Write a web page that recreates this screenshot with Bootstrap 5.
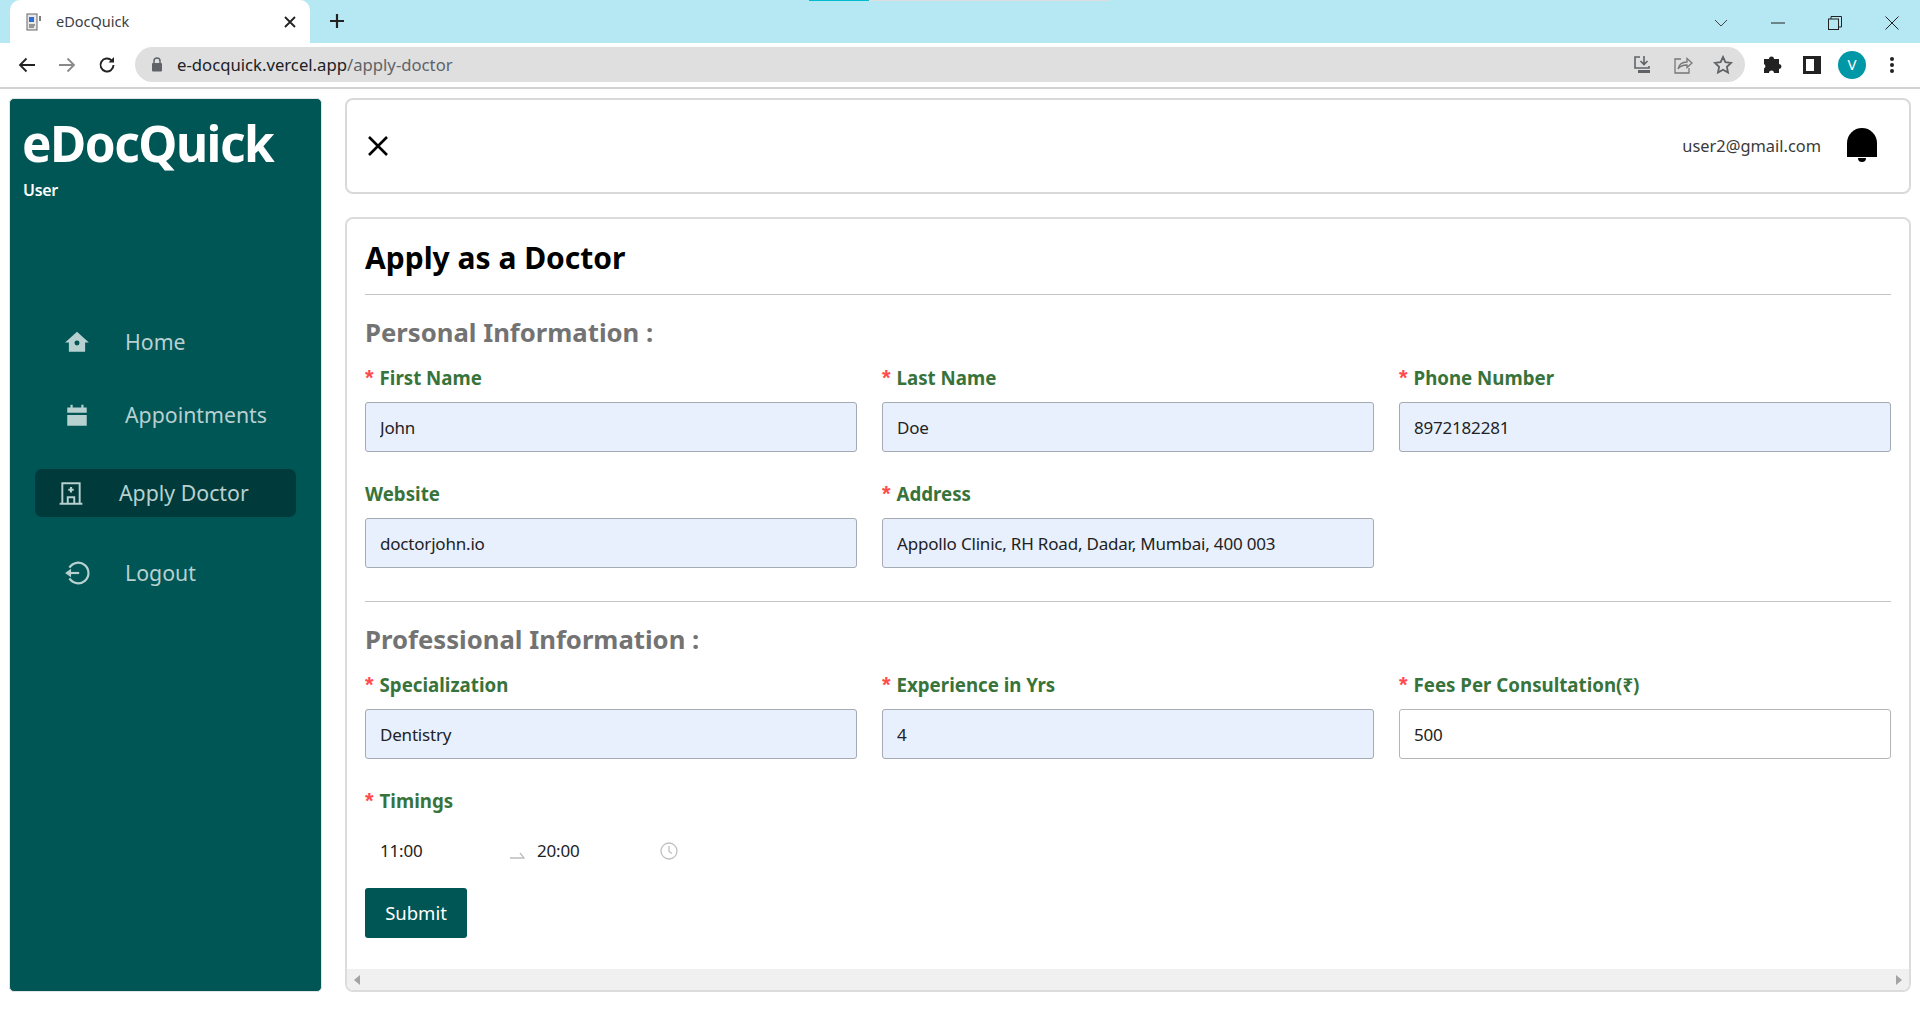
<!DOCTYPE html>
<html lang="en">
<head>
<meta charset="utf-8">
<title>eDocQuick</title>
<link rel="stylesheet" href="https://cdn.jsdelivr.net/npm/bootstrap@5.3.0/dist/css/bootstrap.min.css">
<style>
html,body{height:1017px;overflow:hidden;background:#fff;}
body{font-family:"Noto Sans","Open Sans",sans-serif;color:#212529;}
.tabstrip{height:43px;background:#b6e8f4;position:relative;}
.loadbar{position:absolute;top:0;left:809px;height:1px;width:300px;background:#ddd;}
.loadbar::before{content:"";position:absolute;left:0;top:0;height:1px;width:60px;background:#00bcd0;}
.browser-tab{width:300px;height:43px;margin-left:10px;background:#fff;border-radius:10px 10px 0 0;font-size:14.5px;padding:0 14px 0 15px;color:#3c4043;}
.tab-plus{margin:0 0 14px 19px;}
.win-ctl{width:57px;}
.toolbar{height:46px;border-bottom:2px solid #d2d2d2;padding:0 0 1px 7px;}
.tool-cell{width:40px;}
.omnibox{height:35px;width:1610px;margin:0 7px 0 8px;padding:0 0 0 16px;background:#dfdfdf;border-radius:18px;font-size:16.7px;color:#5f6368;}
.omnibox b{font-weight:400;color:#202124;}
.app-shell{height:928px;padding:9px 9px 25px 9px;gap:23px;}
.side-panel{width:313px;flex:none;background:#005555;border:1px solid #e4e4e4;border-radius:5px;color:#fff;}
.brand-name{font-size:49.500px;font-weight:700;line-height:64px;letter-spacing:-1.5px;margin:12px 0 0 12px;color:#fff;}
.brand-role{font-size:16px;font-weight:600;line-height:22px;margin:4px 0 0 13px;letter-spacing:-.3px;}
.side-menu{margin:117px 25px 0 25px;}
.side-item{height:48px;color:#b7d0d0;font-size:21.3px;border-radius:7px;padding-left:29px;text-decoration:none;}
.side-item svg{width:26px;height:26px;margin-right:35px;flex:none;}
.side-item.gap-a{margin-top:25px;}
.side-item.picked{margin-top:30px;background:#003a3a;padding-left:23px;}
.side-item.gap-c{margin-top:32px;}
.main-col{min-width:0;gap:23px;}
.top-panel{height:96px;background:#fff;border:2px solid #d9d9d9;border-radius:8px;padding:0 32px 0 20px;}
.user-mail{font-size:16.4px;margin-right:26px;color:#3a3a3a;}
.form-panel{background:#fff;border:2px solid #dcdcdc;border-radius:8px;overflow:hidden;}
.form-inner{padding:0 18px;}
.page-title{font-size:30px;font-weight:700;color:#000;line-height:42px;margin:18px 0 0 0;}
.rule-line{margin:15px 0 0 0;border-top:1px solid #a0a0a0;opacity:.6;}
.rule-line.tight{margin-top:4px;}
.sect-title{font-size:25.7px;font-weight:700;color:#737373;line-height:38px;margin:19px 0 0 0;}
.fields-row{--bs-gutter-x:25px;margin-top:13px;}
.fld-cell{margin-bottom:29px;}
.req-label{font-size:18.7px;font-weight:700;color:#37733a;line-height:26px;margin:0 0 11px 0;white-space:nowrap;}
.req-label i{color:#ff4d4f;font-family:"Liberation Sans",sans-serif;font-style:normal;font-weight:700;font-size:22px;line-height:20px;margin-right:6px;}
.form-control.fld{height:50px;border:1px solid #a5aab3;border-radius:3px;font-size:17px;letter-spacing:-.2px;padding:0 14px;color:#222;background:#e8f0fe;}
.form-control.fld.plain{background:#fff;border-color:#b5b5b5;}
.time-range{height:52px;font-size:17px;letter-spacing:-.2px;padding-left:15px;color:#222;}
.time-a{width:130px;}
.time-gap{margin-right:12px;margin-top:8px;}
.time-b{width:123px;}
.submit-btn{display:block;width:102px;height:50px;margin-top:11px;background:#005555;color:#fff;border:none;border-radius:3px;font-size:18.5px;padding:0;}
.submit-btn:hover{background:#005555;color:#fff;}
.hscroll{height:21px;background:#f0f0f0;padding:0 7px;}
</style>
</head>
<body>
<div class="tabstrip d-flex align-items-end">
  <div class="loadbar"></div>
  <div class="browser-tab d-flex align-items-center">
    <svg width="20" height="20" viewBox="0 0 20 20" class="me-2"><rect x="2" y="2" width="10" height="16" fill="#e8e8e8" stroke="#666"/><rect x="4" y="5" width="5" height="5" fill="#2b6fd6"/><path d="M4 13h6M4 15h5" stroke="#444"/><path d="M15 4v5" stroke="#555" stroke-width="1.5"/></svg>
    <span class="flex-grow-1" style="margin-left:3px">eDocQuick</span>
    <svg width="12" height="12" viewBox="0 0 12 12"><path d="M1 1l10 10M11 1L1 11" stroke="#222" stroke-width="1.8"/></svg>
  </div>
  <svg class="tab-plus" width="16" height="16" viewBox="0 0 16 16"><path d="M8 1v14M1 8h14" stroke="#222" stroke-width="2.2"/></svg>
  <div class="ms-auto d-flex align-items-center" style="height:43px">
    <div class="win-ctl text-center"><svg width="14" height="8" viewBox="0 0 14 8"><path d="M1 1l6 6 6-6" fill="none" stroke="#444"/></svg></div>
    <div class="win-ctl text-center"><svg width="14" height="2" viewBox="0 0 14 2"><path d="M0 1h14" stroke="#222"/></svg></div>
    <div class="win-ctl text-center"><svg width="14" height="14" viewBox="0 0 14 14"><rect x=".5" y="3" width="10" height="10.5" fill="none" stroke="#222"/><path d="M3 3V.5h10.500V11H11" fill="none" stroke="#222"/></svg></div>
    <div class="win-ctl text-center"><svg width="14" height="14" viewBox="0 0 14 14"><path d="M.5.5l13 13M13.500.5l-13 13" stroke="#222"/></svg></div>
  </div>
</div>
<div class="toolbar d-flex align-items-center">
  <div class="tool-cell d-flex justify-content-center"><svg width="18" height="16" viewBox="0 0 18 16"><path d="M17 8H2M8.500 1.500L2 8l6.500 6.500" fill="none" stroke="#222" stroke-width="1.800"/></svg></div>
  <div class="tool-cell d-flex justify-content-center"><svg width="18" height="16" viewBox="0 0 18 16"><path d="M1 8h15M9.500 1.500L16 8l-6.500 6.500" fill="none" stroke="#8a8a8a" stroke-width="1.800"/></svg></div>
  <div class="tool-cell d-flex justify-content-center"><svg width="18" height="18" viewBox="0 0 18 18"><path d="M15.500 9a6.500 6.500 0 1 1-1.900-4.600" fill="none" stroke="#222" stroke-width="1.900"/><path d="M16 1v5.500h-5.500z" fill="#222"/></svg></div>
  <div class="omnibox d-flex align-items-center">
    <svg class="flex-shrink-0" width="12" height="15" viewBox="0 0 12 15" style="margin-right:14px"><rect x="1" y="6" width="10" height="8.500" rx="1" fill="#5f6368"/><path d="M3 6V4a3 3 0 0 1 6 0v2" fill="none" stroke="#5f6368" stroke-width="1.500"/></svg>
    <span><b>e-docquick.vercel.app</b>/apply-doctor</span>
    <div class="ms-auto d-flex align-items-center" style="gap:20px;padding-right:12px">
      <svg width="20" height="20" viewBox="0 0 20 20"><path d="M7 2H2v11h14v-2M11 1v8M7.500 6l3.500 3.500L14.500 6" fill="none" stroke="#5f6368" stroke-width="1.600"/><path d="M5 15h12v3H5z" fill="#5f6368"/></svg>
      <svg width="20" height="20" viewBox="0 0 20 20"><path d="M8 4H2v14h14v-5" fill="none" stroke="#777" stroke-width="1.300"/><path d="M5 14c1-5 5-7 9-7V3.500L19 8l-5 4.500V10c-4 0-7 1-9 4z" fill="none" stroke="#777" stroke-width="1.300"/></svg>
      <svg width="20" height="20" viewBox="0 0 20 20"><path d="M10 2l2.400 5.200 5.600.7-4.100 3.900 1.100 5.700L10 14.700l-5 2.800 1.100-5.700L2 7.900l5.600-.7z" fill="none" stroke="#5f6368" stroke-width="1.800"/></svg>
    </div>
  </div>
  <div class="tool-cell d-flex justify-content-center"><svg width="20" height="20" viewBox="0 0 20 20"><path d="M7 4a2.500 2.500 0 0 1 5 0h5v5a2.500 2.500 0 0 1 0 5v4h-5a2.500 2.500 0 0 0-5 0H2v-4.500a2.500 2.500 0 0 0 0-4.500V4z" fill="#222"/></svg></div>
  <div class="tool-cell d-flex justify-content-center"><svg width="18" height="18" viewBox="0 0 18 18"><rect x="0" y="0" width="18" height="18" fill="#222"/><rect x="3" y="3" width="8" height="12" fill="#fff"/></svg></div>
  <div class="tool-cell d-flex justify-content-center"><div class="rounded-circle d-flex align-items-center justify-content-center" style="width:28px;height:28px;background:#0097a7;color:#fff;font-size:15px">V</div></div>
  <div class="tool-cell d-flex justify-content-center"><svg width="4" height="18" viewBox="0 0 4 18"><circle cx="2" cy="3" r="2" fill="#222"/><circle cx="2" cy="9" r="2" fill="#222"/><circle cx="2" cy="15" r="2" fill="#222"/></svg></div>
</div>

<div class="app-shell d-flex">
  <aside class="side-panel d-flex flex-column">
    <div class="brand-name">eDocQuick</div>
    <div class="brand-role">User</div>
    <nav class="side-menu d-flex flex-column">
      <a class="side-item d-flex align-items-center" href="#">
        <svg viewBox="0 0 24 24"><path d="M12 2.500L1 12.500h3.500v8.500h15v-8.500H23z" fill="#b7d0d0"/><circle cx="12" cy="13" r="2.300" fill="#005555"/></svg>Home</a>
      <a class="side-item gap-a d-flex align-items-center" href="#">
        <svg viewBox="0 0 24 24"><path d="M3 5h3V2.500h2V5h8V2.500h2V5h3v5H3zM3 12h18v10H3z" fill="#b7d0d0"/></svg>Appointments</a>
      <a class="side-item picked d-flex align-items-center" href="#">
        <svg viewBox="0 0 24 24"><path d="M4 22V3h16v19M1.500 22h21M9 22v-6h6v6" fill="none" stroke="#b7d0d0" stroke-width="1.800"/><path d="M12 6.500v5M9.500 9h5" stroke="#b7d0d0" stroke-width="2"/></svg>Apply Doctor</a>
      <a class="side-item gap-c d-flex align-items-center" href="#">
        <svg viewBox="0 0 24 24"><path d="M5 7a9.500 9.500 0 1 1 0 10" fill="none" stroke="#b7d0d0" stroke-width="2"/><path d="M14 12H5" stroke="#b7d0d0" stroke-width="2"/><path d="M6.500 8L1 12l5.500 4z" fill="#b7d0d0"/></svg>Logout</a>
    </nav>
  </aside>

  <main class="main-col d-flex flex-column flex-grow-1">
    <header class="top-panel d-flex align-items-center justify-content-between">
      <svg width="22" height="22" viewBox="0 0 22 22"><path d="M2 2l18 18M20 2L2 20" stroke="#000" stroke-width="2.600"/></svg>
      <div class="d-flex align-items-center">
        <span class="user-mail">user2@gmail.com</span>
        <svg width="30" height="36" viewBox="0 0 30 36"><path d="M0 29V15a15 15 0 0 1 30 0v14z" fill="#000"/><path d="M11 30h8a4 4 0 0 1-8 0z" fill="#000"/></svg>
      </div>
    </header>

    <section class="form-panel d-flex flex-column flex-grow-1">
      <form class="form-inner flex-grow-1">
        <h1 class="page-title">Apply as a Doctor</h1>
        <hr class="rule-line">
        <h2 class="sect-title">Personal Information :</h2>
        <div class="row fields-row">
          <div class="col-4 fld-cell"><label class="req-label d-block"><i>*</i>First Name</label><input class="form-control fld" value="John"></div>
          <div class="col-4 fld-cell"><label class="req-label d-block"><i>*</i>Last Name</label><input class="form-control fld" value="Doe"></div>
          <div class="col-4 fld-cell"><label class="req-label d-block"><i>*</i>Phone Number</label><input class="form-control fld" value="8972182281"></div>
          <div class="col-4 fld-cell"><label class="req-label d-block">Website</label><input class="form-control fld" value="doctorjohn.io"></div>
          <div class="col-4 fld-cell"><label class="req-label d-block"><i>*</i>Address</label><input class="form-control fld" value="Appollo Clinic, RH Road, Dadar, Mumbai, 400 003"></div>
        </div>
        <hr class="rule-line tight">
        <h2 class="sect-title">Professional Information :</h2>
        <div class="row fields-row">
          <div class="col-4 fld-cell"><label class="req-label d-block"><i>*</i>Specialization</label><input class="form-control fld" value="Dentistry"></div>
          <div class="col-4 fld-cell"><label class="req-label d-block"><i>*</i>Experience in Yrs</label><input class="form-control fld" value="4"></div>
          <div class="col-4 fld-cell"><label class="req-label d-block"><i>*</i>Fees Per Consultation(₹)</label><input class="form-control fld plain" value="500"></div>
        </div>
        <label class="req-label d-block"><i>*</i>Timings</label>
        <div class="time-range d-flex align-items-center">
          <span class="time-a">11:00</span>
          <svg class="time-gap" width="15" height="8" viewBox="0 0 15 8"><path d="M0 7h14l-4-5" fill="none" stroke="#bdbdbd" stroke-width="1.300"/></svg>
          <span class="time-b">20:00</span>
          <svg width="18" height="18" viewBox="0 0 18 18"><circle cx="9" cy="9" r="8" fill="none" stroke="#bfbfbf" stroke-width="1.300"/><path d="M9 4v5.500l3 2" fill="none" stroke="#bfbfbf" stroke-width="1.300"/></svg>
        </div>
        <button type="button" class="btn submit-btn">Submit</button>
      </form>
      <div class="hscroll d-flex align-items-center justify-content-between">
        <svg width="6" height="10" viewBox="0 0 6 10"><path d="M6 0v10L0 5z" fill="#a3a3a3"/></svg>
        <svg width="6" height="10" viewBox="0 0 6 10"><path d="M0 0v10l6-5z" fill="#a3a3a3"/></svg>
      </div>
    </section>
  </main>
</div>
<script src="https://cdn.jsdelivr.net/npm/bootstrap@5.3.0/dist/js/bootstrap.bundle.min.js"></script>
</body>
</html>
